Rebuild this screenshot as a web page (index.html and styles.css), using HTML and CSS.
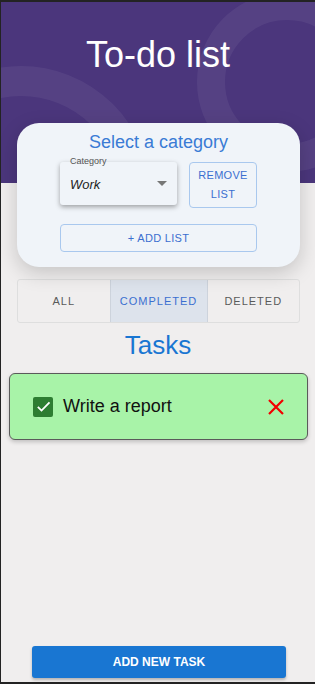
FILE: index.html
```html
<!DOCTYPE html>
<html lang="en">
<head>
    <meta charset="UTF-8">
    <meta name="viewport" content="width=device-width, initial-scale=1.0">
    <title>To-do list</title>
    <link rel="stylesheet" href="styles.css">
</head>
<body>
    <div class="app">
        <header class="header">
            <h1>To-do list</h1>
        </header>

        <div class="category-card">
            <h2>Select a category</h2>
            <div class="category-row">
                <div class="select-box">
                    <span class="select-label">Category</span>
                    <span class="select-value">Work</span>
                    <span class="select-arrow"></span>
                </div>
                <button class="outline-btn remove-btn">REMOVE LIST</button>
            </div>
            <button class="outline-btn add-list-btn">+ ADD LIST</button>
        </div>

        <div class="tabs">
            <button class="tab">ALL</button>
            <button class="tab active">COMPLETED</button>
            <button class="tab">DELETED</button>
        </div>

        <h3 class="tasks-title">Tasks</h3>

        <div class="task">
            <span class="checkbox">
                <svg width="17" height="17" viewBox="0 0 24 24"><path d="M4 12.5l5.2 5.2L20.5 6.3" fill="none" stroke="#fff" stroke-width="2.6"/></svg>
            </span>
            <span class="task-text">Write a report</span>
            <button class="delete-btn">
                <svg width="18" height="18" viewBox="0 0 18 18"><path d="M2 2L16 16M16 2L2 16" stroke="#f20000" stroke-width="2.2"/></svg>
            </button>
        </div>

        <div class="footer">
            <button class="add-task-btn">ADD NEW TASK</button>
        </div>
    </div>
</body>
</html>
```

FILE: styles.css
```css
* {
    margin: 0;
    padding: 0;
    box-sizing: border-box;
    font-family: "Liberation Sans", Arial, sans-serif;
}

body {
    background-color: #232323;
    padding: 2px 0 2px 1px;
    height: 100vh;
}

.app {
    position: relative;
    background-color: #f0eeee;
    height: 100%;
    display: flex;
    flex-direction: column;
    overflow: hidden;
}

.header {
    position: relative;
    background-color: #4b367c;
    height: 181px;
    margin-bottom: -60px;
    overflow: hidden;
    text-align: center;
}

.header::before {
    content: "";
    position: absolute;
    left: -110px;
    top: 64px;
    width: 200px;
    height: 200px;
    border-radius: 50%;
    border: 30px solid rgba(255, 255, 255, 0.06);
}

.header::after {
    content: "";
    position: absolute;
    right: -62px;
    top: -10px;
    width: 124px;
    height: 124px;
    border-radius: 50%;
    border: 28px solid rgba(255, 255, 255, 0.06);
}

.header h1 {
    position: relative;
    color: #fff;
    font-size: 36px;
    font-weight: 400;
    padding-top: 32px;
    z-index: 1;
}

.category-card {
    position: relative;
    margin: 0 15px 0 16px;
    background-color: #f0f4f9;
    border-radius: 22px;
    box-shadow: 0 6px 20px rgba(0, 0, 0, 0.18);
    padding: 9px 0 15px;
    display: flex;
    flex-direction: column;
    align-items: center;
}

.category-card h2 {
    color: #3a7bd5;
    font-size: 18px;
    font-weight: 400;
    margin-bottom: 9px;
}

.category-row {
    display: flex;
    gap: 12px;
    width: 197px;
    margin-bottom: 16px;
}

.select-box {
    position: relative;
    width: 117px;
    height: 43px;
    background-color: #f0f4f9;
    border-radius: 3px;
    box-shadow: 0 2px 5px rgba(0, 0, 0, 0.35);
    padding: 13px 10px 0;
}

.select-label {
    position: absolute;
    left: 10px;
    top: -6px;
    font-size: 9px;
    color: #555;
}

.select-value {
    font-size: 13px;
    font-style: italic;
    color: #222;
}

.select-arrow {
    position: absolute;
    right: 10px;
    top: 19px;
    border-left: 5px solid transparent;
    border-right: 5px solid transparent;
    border-top: 5px solid #777;
}

.outline-btn {
    background: none;
    border: 1px solid #a9c8ee;
    border-radius: 4px;
    color: #3b6fd0;
    font-size: 11px;
    letter-spacing: 0.3px;
    cursor: pointer;
}

.remove-btn {
    width: 68px;
    height: 46px;
    line-height: 19px;
    padding: 0 6px;
}

.add-list-btn {
    width: 197px;
    height: 28px;
}

.tabs {
    display: flex;
    margin: 12px 15px 0 16px;
    border: 1px solid #dedede;
    border-radius: 3px;
    height: 44px;
}

.tab {
    flex: 1;
    background: none;
    border: none;
    color: #5a5a5a;
    font-size: 11px;
    letter-spacing: 1px;
    cursor: pointer;
}

.tab.active {
    flex: 0 0 98px;
    background-color: #dde3ec;
    color: #3b6fd0;
    border-left: 1px solid #cdd3dc;
    border-right: 1px solid #cdd3dc;
}

.tasks-title {
    color: #1976d2;
    font-size: 26px;
    font-weight: 400;
    text-align: center;
    margin-top: 7px;
}

.task {
    display: flex;
    align-items: center;
    margin: 12px 7px 0 8px;
    height: 67px;
    background-color: #a8f3a8;
    border: 1px solid #5a5a5a;
    border-radius: 6px;
    box-shadow: 0 2px 4px rgba(0, 0, 0, 0.2);
    padding: 0 22px 0 23px;
}

.checkbox {
    display: flex;
    align-items: center;
    justify-content: center;
    width: 20px;
    height: 20px;
    background-color: #2e7d32;
    border-radius: 2px;
    margin-right: 10px;
}

.task-text {
    flex: 1;
    font-size: 18px;
    color: #111;
}

.delete-btn {
    background: none;
    border: none;
    display: flex;
    cursor: pointer;
}

.footer {
    margin-top: auto;
    padding: 0 29px 4px 31px;
}

.add-task-btn {
    width: 100%;
    height: 32px;
    background-color: #1976d2;
    color: #fff;
    border: none;
    border-radius: 3px;
    font-size: 12px;
    font-weight: 700;
    box-shadow: 0 2px 3px rgba(0, 0, 0, 0.25);
    cursor: pointer;
}
```
